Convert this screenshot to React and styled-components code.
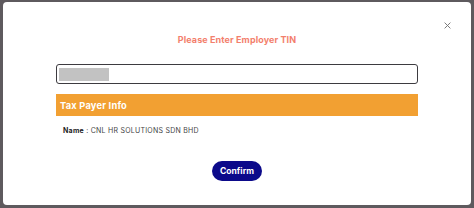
import React from 'react';
import styled, { createGlobalStyle } from 'styled-components';

const GlobalStyle = createGlobalStyle`
  html, body {
    margin: 0;
    padding: 0;
    background: #5e5a5e;
  }
  body {
    font-family: 'Inter', 'Liberation Sans', sans-serif;
  }
`;

const Frame = styled.div`
  width: 474px;
  height: 208px;
  box-sizing: border-box;
  padding: 2px 3px 3px 3px;
  background: #5e5a5e;
`;

const Modal = styled.div`
  position: relative;
  height: 100%;
  background: #fff;
  border-radius: 4px;
  display: flex;
  flex-direction: column;
  align-items: center;
  padding-top: 31px;
  box-sizing: border-box;
`;

const Close = styled.button`
  position: absolute;
  top: 16px;
  right: 17px;
  width: 14px;
  height: 14px;
  padding: 0;
  border: none;
  background: none;
  cursor: pointer;
  display: flex;
  align-items: center;
  justify-content: center;
`;

const Title = styled.h2`
  margin: 0;
  font-size: 9px;
  font-weight: 700;
  color: #f37f6d;
  letter-spacing: 0.1px;
  line-height: 14px;
`;

const Body = styled.div`
  width: 362px;
  margin-top: 17px;
  display: flex;
  flex-direction: column;
`;

const InputWrap = styled.div`
  height: 20px;
  box-sizing: border-box;
  border: 1.5px solid #3d3b40;
  border-radius: 3px;
  padding: 2px 2px;
  display: flex;
  align-items: center;
`;

const Redacted = styled.div`
  width: 50px;
  height: 13px;
  background: #c2c2c2;
`;

const InfoBar = styled.div`
  margin-top: 10px;
  height: 22px;
  background: #f2a032;
  color: #fff;
  font-size: 9.3px;
  font-weight: 700;
  display: flex;
  align-items: center;
  padding-left: 4px;
  letter-spacing: 0.2px;
`;

const InfoRow = styled.div`
  margin-top: 10px;
  padding-left: 7px;
  font-size: 7px;
  color: #444;
  letter-spacing: 0.25px;
  line-height: 10px;
  b {
    color: #222;
    font-weight: 700;
  }
`;

const ConfirmButton = styled.button`
  margin-top: 25px;
  width: 50px;
  height: 20px;
  border: none;
  border-radius: 10px;
  background: #0c0a8a;
  color: #fff;
  font-family: 'Inter', 'Liberation Sans', sans-serif;
  font-size: 8.5px;
  font-weight: 700;
  cursor: pointer;
  padding: 0;
`;

export default function App() {
  return (
    <>
      <GlobalStyle />
      <Frame>
        <Modal>
          <Close aria-label="close">
            <svg width="7" height="7" viewBox="0 0 8 8">
              <path d="M1 1L7 7M7 1L1 7" stroke="#777" strokeWidth="1.1" strokeLinecap="round" />
            </svg>
          </Close>
          <Title>Please Enter Employer TIN</Title>
          <Body>
            <InputWrap>
              <Redacted />
            </InputWrap>
            <InfoBar>Tax Payer Info</InfoBar>
            <InfoRow>
              <b>Name</b> : CNL HR SOLUTIONS SDN BHD
            </InfoRow>
          </Body>
          <ConfirmButton>Confirm</ConfirmButton>
        </Modal>
      </Frame>
    </>
  );
}
